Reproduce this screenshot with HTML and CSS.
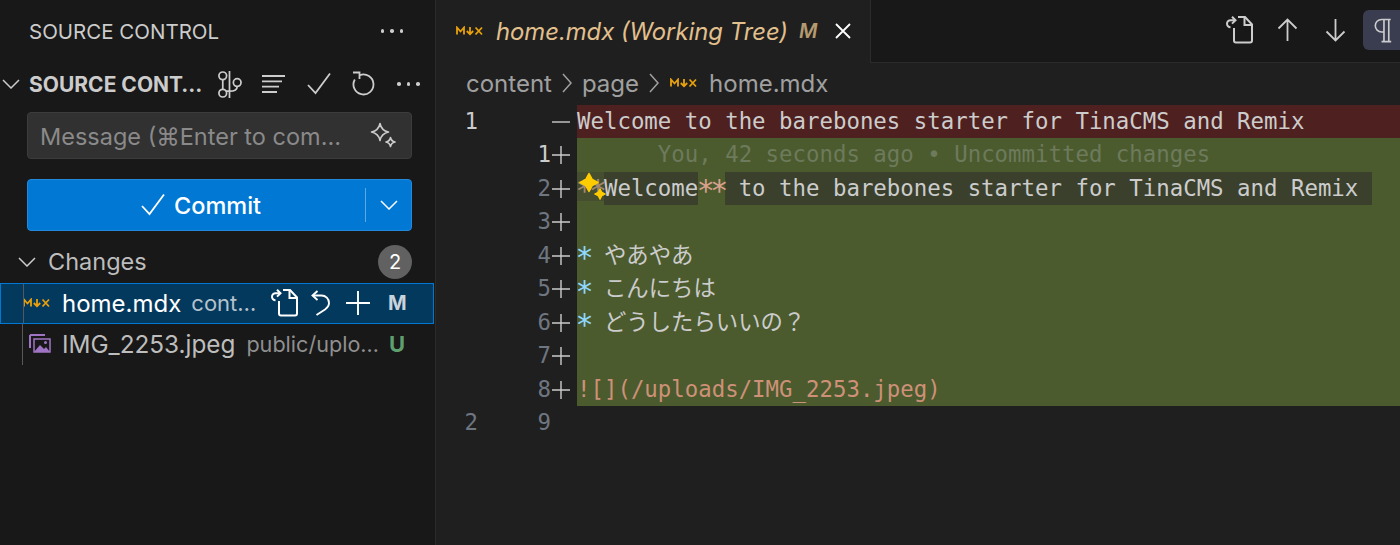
FILE: index.html
```html
<!DOCTYPE html>
<html lang="en">
<head>
<meta charset="utf-8">
<title>Source Control</title>
<link rel="stylesheet" href="styles.css">
</head>
<body>
<svg class="defs" width="0" height="0" aria-hidden="true">
  <defs>
    <symbol id="mdx" viewBox="0 0 27 10">
      <path d="M1 8.500V1.500l3.500 4 3.500-4v7" fill="none" stroke="currentColor" stroke-width="1.800"/>
      <path d="M14 1v7M10.800 5l3.200 3.200L17.200 5" fill="none" stroke="currentColor" stroke-width="1.800"/>
      <path d="M19.500 1.500l6.500 7M26 1.500l-6.500 7" fill="none" stroke="currentColor" stroke-width="1.800"/>
    </symbol>
    <symbol id="open-file" viewBox="0 0 30 30">
      <path d="M9 13v12.500a2 2 0 0 0 2 2h14a2 2 0 0 0 2-2V9.500L20 2h-7" fill="none" stroke="currentColor" stroke-width="2"/>
      <path d="M19.500 2.500V10H27" fill="none" stroke="currentColor" stroke-width="2"/>
      <path d="M7 1.800l3.500 3.400L7 8.600" fill="none" stroke="currentColor" stroke-width="2"/>
      <path d="M10 5.200H5.500a3.500 3.500 0 0 0-3.500 3.500v0a3.500 3.500 0 0 0 3.500 3.500" fill="none" stroke="currentColor" stroke-width="2"/>
    </symbol>
    <symbol id="chev" viewBox="0 0 18 10">
      <path d="M1 1l8 8 8-8" fill="none" stroke="currentColor" stroke-width="1.500"/>
    </symbol>
    <symbol id="check" viewBox="0 0 24 24">
      <path d="M1 13l7.500 8L23 1.500" fill="none" stroke="currentColor" stroke-width="1.800"/>
    </symbol>
    <symbol id="plus-mark" viewBox="0 0 18 18">
      <path d="M9 0v18M0 9h18" fill="none" stroke="currentColor" stroke-width="1.400"/>
    </symbol>
    <symbol id="minus-mark" viewBox="0 0 18 18">
      <path d="M0 9h18" fill="none" stroke="currentColor" stroke-width="1.400"/>
    </symbol>
  </defs>
</svg>

<aside class="sidebar">
  <header class="side-title">
    <span>SOURCE CONTROL</span>
    <span class="dots"><i></i><i></i><i></i></span>
  </header>

  <div class="section-head">
    <svg class="chev-icon"><use href="#chev"/></svg>
    <span class="section-name">SOURCE CONT…</span>
    <div class="section-actions">
      <svg class="act graph" viewBox="0 0 26 28">
        <circle cx="6" cy="5" r="4" fill="none" stroke="currentColor" stroke-width="1.800"/>
        <circle cx="6" cy="23" r="4" fill="none" stroke="currentColor" stroke-width="1.800"/>
        <circle cx="21" cy="12" r="4" fill="none" stroke="currentColor" stroke-width="1.800"/>
        <path d="M6 9v10M13 0v28M21 16c0 5-5 5-8 5H9" fill="none" stroke="currentColor" stroke-width="1.800"/>
      </svg>
      <svg class="act lines" viewBox="0 0 24 18">
        <path d="M0 1h23M0 6.300h20M0 11.600h17M0 17h15" fill="none" stroke="currentColor" stroke-width="1.800"/>
      </svg>
      <svg class="act tick"><use href="#check"/></svg>
      <svg class="act refresh" viewBox="0 0 24 26">
        <path d="M8 4.100A10 10 0 1 1 2.800 8.500" fill="none" stroke="currentColor" stroke-width="1.800"/>
        <path d="M1 1.500H7.500V8" fill="none" stroke="currentColor" stroke-width="1.800"/>
      </svg>
      <span class="dots"><i></i><i></i><i></i></span>
    </div>
  </div>

  <div class="message">
    <span class="placeholder">Message (⌘Enter to com…</span>
    <svg class="sparkle" viewBox="0 0 28 28">
      <path d="M11 1.500c1 5 3.500 7.500 8.500 8.500-5 1-7.500 3.500-8.500 8.500C10 13.500 7.500 11 2.500 10 7.500 9 10 6.500 11 1.500z" fill="none" stroke="currentColor" stroke-width="1.600" stroke-linejoin="round"/>
      <path d="M21.500 15.500c.5 2.500 2 4 4.500 4.500-2.500.5-4 2-4.500 4.500-.5-2.500-2-4-4.500-4.500 2.500-.5 4-2 4.500-4.500z" fill="none" stroke="currentColor" stroke-width="1.600" stroke-linejoin="round"/>
    </svg>
  </div>

  <div class="commit">
    <div class="commit-main">
      <svg class="commit-check"><use href="#check"/></svg>
      <span>Commit</span>
    </div>
    <span class="commit-sep"></span>
    <svg class="commit-chev"><use href="#chev"/></svg>
  </div>

  <div class="changes-head">
    <svg class="chev-icon"><use href="#chev"/></svg>
    <span class="changes-name">Changes</span>
    <span class="badge">2</span>
  </div>

  <div class="file-row selected">
    <svg class="file-icon mdx"><use href="#mdx"/></svg>
    <span class="file-name">home.mdx</span>
    <span class="file-path">cont…</span>
    <svg class="row-act open"><use href="#open-file"/></svg>
    <svg class="row-act undo" viewBox="0 0 20 26">
      <path d="M6.500 1L1.500 5.500l5 4.500" fill="none" stroke="currentColor" stroke-width="1.900"/>
      <path d="M2 5.500h8.500a7.500 7.500 0 0 1 7.500 7.500c0 3-2 5-4 6.500L5.500 25" fill="none" stroke="currentColor" stroke-width="1.900"/>
    </svg>
    <svg class="row-act plus" viewBox="0 0 26 26">
      <path d="M13 1v24M1 13h24" fill="none" stroke="currentColor" stroke-width="1.900"/>
    </svg>
    <span class="status modified">M</span>
  </div>

  <div class="file-row">
    <svg class="file-icon image" viewBox="0 0 22 19">
      <path d="M1 1h15M1 1v13" fill="none" stroke="#a074c4" stroke-width="2"/>
      <path d="M5 5h16v13H5z" fill="none" stroke="#a074c4" stroke-width="1.500"/>
      <path d="M5 18l6-7 4 4 2-2 4 5z" fill="#a074c4"/>
      <circle cx="16.500" cy="8.500" r="1.500" fill="#a074c4"/>
    </svg>
    <span class="file-name dim">IMG_2253.jpeg</span>
    <span class="file-path">public/uplo…</span>
    <span class="status untracked">U</span>
  </div>
</aside>

<main class="editor">
  <div class="tabbar">
    <div class="tab">
      <svg class="tab-icon"><use href="#mdx"/></svg>
      <span class="tab-name">home.mdx (Working Tree)</span>
      <span class="tab-status">M</span>
      <svg class="tab-close" viewBox="0 0 16 16">
        <path d="M1 1l14 14M15 1L1 15" fill="none" stroke="currentColor" stroke-width="1.800"/>
      </svg>
    </div>
    <div class="tab-actions">
      <svg class="open-big"><use href="#open-file"/></svg>
      <svg class="arrow arrow-up" viewBox="0 0 20 24">
        <path d="M10 23V2M1 10.500L10 1.500l9 9" fill="none" stroke="currentColor" stroke-width="1.800"/>
      </svg>
      <svg class="arrow" viewBox="0 0 20 24">
        <path d="M10 1v21M1 13.500l9 9 9-9" fill="none" stroke="currentColor" stroke-width="1.800"/>
      </svg>
      <div class="pilcrow">
        <svg class="pilcrow-icon" viewBox="0 0 18 26">
          <path d="M17 1.500H7.500a6.500 6.500 0 0 0 0 13H10" fill="none" stroke="currentColor" stroke-width="1.700"/>
          <path d="M10 1.500v23M15 1.500v23M7.500 24.500H17.500" fill="none" stroke="currentColor" stroke-width="1.700"/>
        </svg>
      </div>
    </div>
  </div>

  <nav class="crumbs">
    <span>content</span>
    <svg class="crumb-sep" viewBox="0 0 10 20"><path d="M1 1l8 9-8 9" fill="none" stroke="currentColor" stroke-width="1.500"/></svg>
    <span>page</span>
    <svg class="crumb-sep" viewBox="0 0 10 20"><path d="M1 1l8 9-8 9" fill="none" stroke="currentColor" stroke-width="1.500"/></svg>
    <svg class="crumb-icon"><use href="#mdx"/></svg>
    <span>home.mdx</span>
  </nav>

  <div class="diff">
    <div class="row del"><span class="old active">1</span><span class="new"></span><span class="mark"><svg class="mark-icon"><use href="#minus-mark"/></svg></span><span class="code">Welcome to the barebones starter for TinaCMS and Remix</span></div>
    <div class="row add"><span class="old"></span><span class="new active">1</span><span class="mark"><svg class="mark-icon"><use href="#plus-mark"/></svg></span><span class="code blame">      You, 42 seconds ago • Uncommitted changes</span></div>
    <div class="row add"><span class="old"></span><span class="new">2</span><span class="mark"><svg class="mark-icon"><use href="#plus-mark"/></svg></span><span class="code"><span class="hl-first"><span class="star dim-star">**</span></span><span class="hl">Welcome</span><span class="star pink">**</span><span class="hl hl-wide"> to the barebones starter for TinaCMS and Remix</span><svg class="emoji" viewBox="0 0 30 30"><path d="M12 1.500l3.200 5.800 5.800 3.200-5.800 3.200L12 19.500l-3.200-5.800L3 10.500l5.800-3.200z" fill="#ffcc00" stroke="#ffcc00" stroke-width="1.500" stroke-linejoin="round"/><path d="M23 16.500l1.900 3.600 3.600 1.900-3.600 1.900-1.900 3.600-1.900-3.600-3.600-1.900 3.600-1.900z" fill="#ffcc00" stroke="#ffcc00" stroke-width="1" stroke-linejoin="round"/></svg></span></div>
    <div class="row add"><span class="old"></span><span class="new">3</span><span class="mark"><svg class="mark-icon"><use href="#plus-mark"/></svg></span><span class="code"></span></div>
    <div class="row add"><span class="old"></span><span class="new">4</span><span class="mark"><svg class="mark-icon"><use href="#plus-mark"/></svg></span><span class="code"><span class="star bullet">*</span> やあやあ</span></div>
    <div class="row add"><span class="old"></span><span class="new">5</span><span class="mark"><svg class="mark-icon"><use href="#plus-mark"/></svg></span><span class="code"><span class="star bullet">*</span> こんにちは</span></div>
    <div class="row add"><span class="old"></span><span class="new">6</span><span class="mark"><svg class="mark-icon"><use href="#plus-mark"/></svg></span><span class="code"><span class="star bullet">*</span> どうしたらいいの？</span></div>
    <div class="row add"><span class="old"></span><span class="new">7</span><span class="mark"><svg class="mark-icon"><use href="#plus-mark"/></svg></span><span class="code"></span></div>
    <div class="row add"><span class="old"></span><span class="new">8</span><span class="mark"><svg class="mark-icon"><use href="#plus-mark"/></svg></span><span class="code link">![](/uploads/IMG_2253.jpeg)</span></div>
    <div class="row"><span class="old">2</span><span class="new">9</span><span class="mark"></span><span class="code"></span></div>
  </div>
</main>
</body>
</html>
```

FILE: styles.css
```css
* { box-sizing: border-box; }
html, body { margin: 0; height: 100%; overflow: hidden; }
body {
  display: flex;
  width: 1400px;
  height: 545px;
  background: #1f1f1f;
  color: #cccccc;
  font-family: Inter, "Liberation Sans", sans-serif;
}
.defs { position: absolute; }
svg { display: block; flex: none; }

/* Sidebar */
.sidebar {
  width: 436px;
  flex: none;
  background: #181818;
  border-right: 1px solid #2b2b2b;
  position: relative;
}
.side-title {
  height: 64px;
  padding: 0 32px 2px 29px;
  display: flex;
  align-items: center;
  justify-content: space-between;
  font-size: 20.500px;
  color: #cccccc;
}
.dots { display: inline-flex; gap: 6px; }
.dots i { width: 3.500px; height: 3.500px; border-radius: 50%; background: #cccccc; }

.section-head {
  height: 41px;
  display: flex;
  align-items: center;
  padding: 0 0 1px 2px;
}
.chev-icon { width: 18px; height: 10px; color: #cccccc; }
.section-name {
  margin-left: 9px;
  width: 173px;
  font-size: 21px;
  font-weight: 700;
  color: #cccccc;
  white-space: nowrap;
}
.section-actions {
  margin-left: 15px;
  display: flex;
  align-items: center;
  color: #cccccc;
}
.act { height: 24px; }
.graph { width: 25px; height: 27px; }
.lines { width: 24px; height: 18px; margin-left: 20px; }
.tick { width: 24px; height: 24px; margin-left: 21px; }
.refresh { width: 24px; height: 26px; margin-left: 21px; }
.section-actions .dots { margin-left: 21px; }

.message {
  margin: 7px 23px 0 27px;
  height: 47px;
  background: #313131;
  border: 1px solid #3c3c3c;
  border-radius: 4px;
  display: flex;
  align-items: center;
  justify-content: space-between;
  padding: 1px 14px 0 12px;
}
.placeholder { font-size: 23.500px; color: #8a8a8a; white-space: nowrap; }
.sparkle { width: 28px; height: 28px; color: #cccccc; }

.commit {
  margin: 20px 23px 0 27px;
  height: 52px;
  background: #0078d4;
  border: 1px solid #2488db;
  border-radius: 4px;
  display: flex;
  align-items: center;
  color: #ffffff;
}
.commit-main {
  flex: 1;
  display: flex;
  align-items: center;
  justify-content: center;
  gap: 9px;
  padding-left: 9px;
  font-size: 23.500px;
  font-weight: 500;
}
.commit-check { width: 24px; height: 24px; }
.commit-sep { width: 1px; height: 34px; background: #5da9e3; }
.commit-chev { width: 18px; height: 10px; margin: 0 13px 0 14px; }

.changes-head {
  margin-top: 10px;
  height: 42px;
  display: flex;
  align-items: center;
  padding: 0 23px 0 18px;
  color: #cccccc;
}
.changes-name { margin: -2px 0 0 12px; font-size: 23.500px; flex: 1; color: #bdbdbd; }
.badge {
  width: 34px;
  height: 34px;
  border-radius: 50%;
  background: #616161;
  color: #ffffff;
  font-size: 20px;
  display: flex;
  align-items: center;
  justify-content: center;
}

.file-row {
  height: 41px;
  display: flex;
  align-items: center;
  padding: 0 29px 2px 23px;
  position: relative;
  white-space: nowrap;
}
.file-row::before {
  content: "";
  position: absolute;
  left: 22px;
  top: 0;
  bottom: 0;
  width: 1px;
  background: #585858;
}
.file-row.selected {
  background: #04395e;
  border: 1px solid #0078d4;
  height: 41px;
  padding: 0 27px 1px 22px;
  margin-right: 1px;
}
.file-icon.mdx { width: 27px; height: 10px; color: #e8a10c; }
.file-icon.image { width: 22px; height: 19px; margin-left: 6px; }
.file-name { margin-left: 12px; font-size: 24px; font-weight: 400; color: #ffffff; }
.file-name.dim { margin-left: 11px; font-size: 24.300px; color: #bdbdbd; }
.file-path { margin-left: 10px; font-size: 22px; color: #8f8f8f; flex: 1; }
.dim + .file-path { margin-left: 11px; font-size: 21.600px; }
.selected .file-path { color: #b5c2cc; }
.row-act { color: #ffffff; }
.open { width: 30px; height: 30px; }
.undo { width: 20px; height: 26px; margin-left: 11px; }
.plus { width: 26px; height: 26px; margin-left: 14px; }
.status { font-size: 20px; font-weight: 700; width: 18px; text-align: center; }
.modified { color: #c8d3db; margin-left: 17px; }
.untracked { font-size: 22px; color: #5f9e6e; }

/* Editor */
.editor { flex: 1; min-width: 0; display: flex; flex-direction: column; }
.tabbar {
  height: 63px;
  flex: none;
  background: #181818;
  border-bottom: 1px solid #2b2b2b;
  display: flex;
  justify-content: space-between;
}
.tab {
  width: 435px;
  height: 63px;
  background: #1f1f1f;
  border-right: 1px solid #2b2b2b;
  display: flex;
  align-items: center;
  padding: 0 0 1px 20px;
}
.tab-icon { width: 27px; height: 10px; color: #e8a10c; }
.tab-name {
  margin-left: 13px;
  font-size: 23.800px;
  font-style: italic;
  color: #e2c08d;
  white-space: nowrap;
}
.tab-status {
  margin-left: 11px;
  font-size: 20px;
  font-weight: 600;
  font-style: italic;
  color: #b59a70;
}
.tab-close { width: 16px; height: 16px; margin-left: 18px; color: #ffffff; }
.tab-actions { display: flex; align-items: center; color: #cccccc; padding-bottom: 2px; }
.open-big { width: 30px; height: 30px; }
.arrow { width: 21px; height: 24px; margin-left: 27px; }
.arrow-up { margin-left: 22px; }
.pilcrow {
  margin-left: 17px;
  width: 37px;
  height: 40px;
  background: #3a3d50;
  border-radius: 6px 0 0 6px;
  display: flex;
  align-items: center;
  padding-left: 11px;
}
.pilcrow-icon { width: 18px; height: 25px; }

.crumbs {
  height: 41.500px;
  flex: none;
  display: flex;
  align-items: center;
  padding: 0 0 1px 30px;
  font-size: 24px;
  color: #a0a0a0;
}
.crumb-sep { width: 10px; height: 20px; margin: 0 10px 0 10px; color: #a0a0a0; }
.crumb-icon { width: 27px; height: 10px; color: #e8a10c; margin: 0 12px 0 1px; }

.diff {
  font-family: "DejaVu Sans Mono", "Noto Sans CJK JP", monospace;
  font-size: 22.380px;
  line-height: 33.500px;
}
.row { display: grid; grid-template-columns: 42px 73px 26px 1fr; height: 33.500px; }
.old, .new { text-align: right; color: #6e7681; }
.active { color: #cccccc; }
.mark { color: #cccccc; padding: 8px 0 0 1px; }
.mark-icon { width: 18px; height: 18px; }
.code { white-space: pre; color: #cccccc; position: relative; display: block; }
.del .code { background: #4e201f; }
.add .code { background: #4b5b2e; }
.blame { color: #6d7a5c; }
.hl { display: inline-block; background: #3a402c; }
.hl-first {
  display: inline-block;
  height: 29px;
  line-height: 33.500px;
  vertical-align: top;
  background: #454f30;
}
.hl-wide { padding-right: 14px; }
.star {
  font-size: 30px;
  line-height: 0;
  letter-spacing: -4.600px;
  vertical-align: -5.500px;
  position: relative;
  left: -1.500px;
}
.star.pink { color: #d9a08e; }
.star.dim-star { color: #a58a70; }
.bullet { color: #8fd8ff; }
.link { color: #ce9178; }
.emoji { position: absolute; left: 0; top: 0; width: 30px; height: 30px; }
```
